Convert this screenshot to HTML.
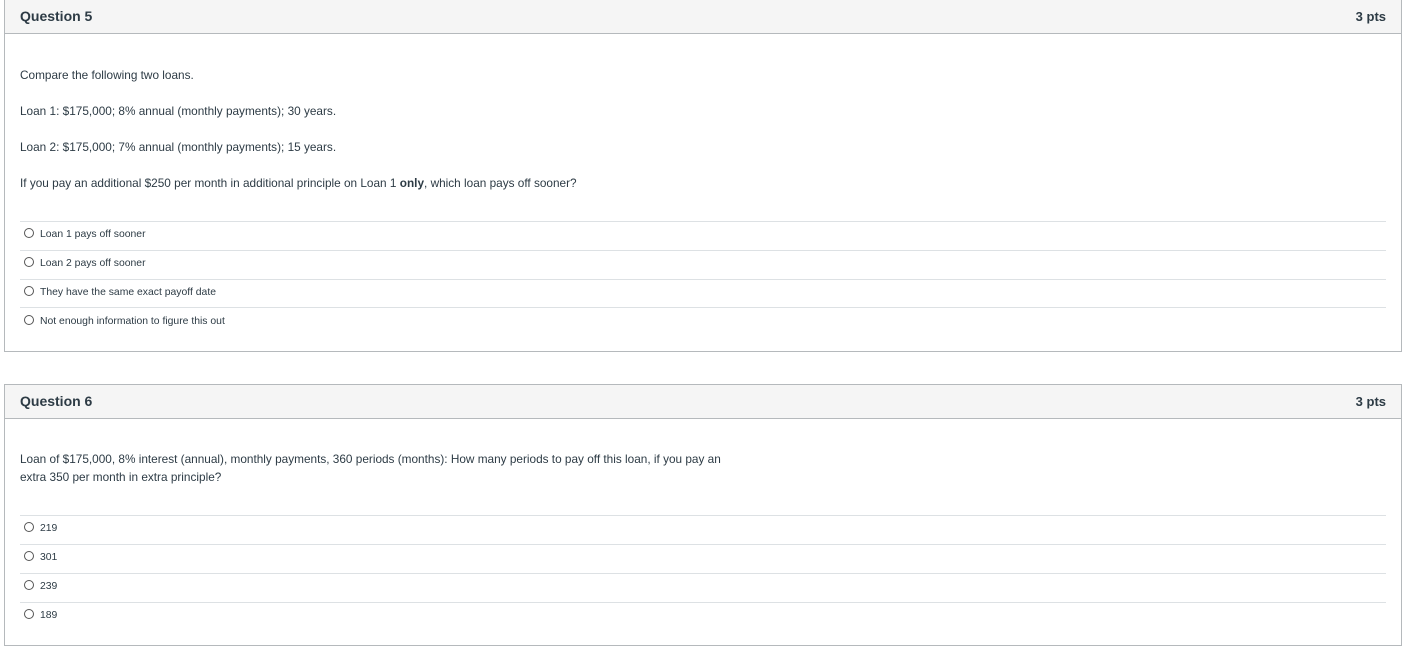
<!DOCTYPE html>
<html><head><style>
body{margin:0;background:#fff;font-family:"Liberation Sans",sans-serif;color:#2d3b45;}
.box{position:absolute;left:4px;width:1396px;border:1px solid #b5b9bc;background:#fff;}
.hd{position:absolute;left:0;right:0;top:0;height:33px;background:#f5f5f5;border-bottom:1px solid #b5b9bc;}
.hd .t{position:absolute;left:15px;top:8px;font-size:14px;font-weight:bold;color:#2d3b45;}
.hd .p{position:absolute;right:15px;top:9px;font-size:13px;font-weight:bold;}
.tx{position:absolute;left:15px;font-size:11.8px;white-space:nowrap;}
.ln{position:absolute;left:15px;width:1366px;border-top:1px solid #dde1e4;}
.op{position:absolute;left:19px;font-size:10.4px;white-space:nowrap;}
.op:before{content:"";display:inline-block;width:8px;height:8px;border:1px solid #555;border-radius:50%;margin-right:6px;vertical-align:-1px;}
</style></head><body>
<div class="box" style="top:-1px;height:351px;">
 <div class="hd"><span class="t">Question 5</span><span class="p">3 pts</span></div>
 <div class="tx" style="top:68px">Compare the following two loans.</div>
 <div class="tx" style="top:104px">Loan 1: $175,000; 8% annual (monthly payments); 30 years.</div>
 <div class="tx" style="top:140px">Loan 2: $175,000; 7% annual (monthly payments); 15 years.</div>
 <div class="tx" style="top:176px">If you pay an additional $250 per month in additional principle on Loan 1 <b>only</b>, which loan pays off sooner?</div>
 <div class="ln" style="top:221px"></div>
 <div class="op" style="top:228px">Loan 1 pays off sooner</div>
 <div class="ln" style="top:250px"></div>
 <div class="op" style="top:257px">Loan 2 pays off sooner</div>
 <div class="ln" style="top:279px"></div>
 <div class="op" style="top:286px">They have the same exact payoff date</div>
 <div class="ln" style="top:307px"></div>
 <div class="op" style="top:315px">Not enough information to figure this out</div>
</div>
<div class="box" style="top:384px;height:260px;">
 <div class="hd"><span class="t">Question 6</span><span class="p">3 pts</span></div>
 <div class="tx" style="top:67px">Loan of $175,000, 8% interest (annual), monthly payments, 360 periods (months): How many periods to pay off this loan, if you pay an</div>
 <div class="tx" style="top:85px">extra 350 per month in extra principle?</div>
 <div class="ln" style="top:130px"></div>
 <div class="op" style="top:137px">219</div>
 <div class="ln" style="top:159px"></div>
 <div class="op" style="top:166px">301</div>
 <div class="ln" style="top:188px"></div>
 <div class="op" style="top:195px">239</div>
 <div class="ln" style="top:217px"></div>
 <div class="op" style="top:224px">189</div>
</div>
</body></html>
